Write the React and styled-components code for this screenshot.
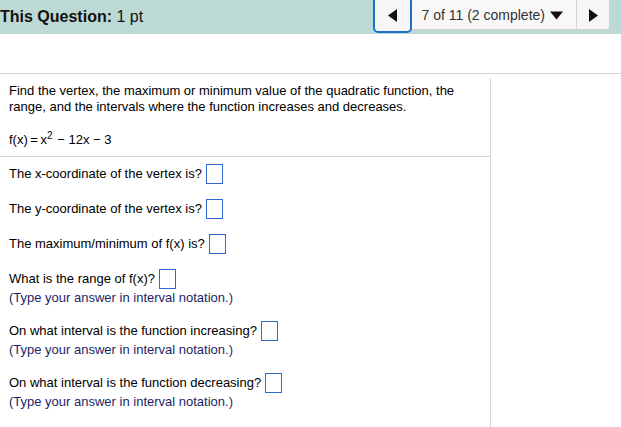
import styled, { createGlobalStyle } from "styled-components";

const GlobalStyle = createGlobalStyle`
  html, body {
    margin: 0;
    padding: 0;
    background: #fff;
  }
  body {
    font-family: "Liberation Sans", Arial, Helvetica, sans-serif;
    color: #000;
  }
`;

const questions = [
  { label: "The x-coordinate of the vertex is?" },
  { label: "The y-coordinate of the vertex is?" },
  { label: "The maximum/minimum of f(x) is?" },
  { label: "What is the range of f(x)?", hint: "(Type your answer in interval notation.)" },
  { label: "On what interval is the function increasing?", hint: "(Type your answer in interval notation.)" },
  { label: "On what interval is the function decreasing?", hint: "(Type your answer in interval notation.)" },
];

function Triangle({ dir }) {
  if (dir === "down") {
    return (
      <svg width="13" height="9" viewBox="0 0 13 9">
        <path d="M0 0.5 L13 0.5 L6.5 8.5 Z" fill="#111" />
      </svg>
    );
  }
  const d = dir === "left" ? "M9 0 L9 13 L0 6.5 Z" : "M0 0 L0 13 L9 6.5 Z";
  return (
    <svg width="9" height="13" viewBox="0 0 9 13">
      <path d={d} fill="#111" />
    </svg>
  );
}

function App() {
  return (
    <Page>
      <GlobalStyle />
      <Header>
        <Title>
          <b>This Question:</b> 1 pt
        </Title>
        <Nav>
          <NavArrow $focused $width={39}>
            <Triangle dir="left" />
          </NavArrow>
          <NavLabel>
            7 of 11 (2 complete)
            <Triangle dir="down" />
          </NavLabel>
          <NavArrow $width={33}>
            <Triangle dir="right" />
          </NavArrow>
        </Nav>
      </Header>
      <Spacer />
      <Body>
        <MainColumn>
          <Prompt>
            <Para>
              Find the vertex, the maximum or minimum value of the quadratic function, the
              range, and the intervals where the function increases and decreases.
            </Para>
            <Formula>
              f(x)&#8201;=&#8201;x<Sup>2</Sup> &minus; 12x &minus; 3
            </Formula>
          </Prompt>
          <Questions>
            {questions.map((q) => (
              <Question key={q.label}>
                <AnswerRow>
                  {q.label}
                  <AnswerBox />
                </AnswerRow>
                {q.hint && <Hint>{q.hint}</Hint>}
              </Question>
            ))}
          </Questions>
        </MainColumn>
      </Body>
    </Page>
  );
}

const Page = styled.div`
  display: flex;
  flex-direction: column;
  min-height: 100vh;
  overflow: hidden;
`;

const Header = styled.div`
  display: flex;
  align-items: flex-start;
  justify-content: space-between;
  height: 34px;
  background: #bcd9d5;
  overflow: hidden;
`;

const Title = styled.div`
  font-size: 16px;
  line-height: 34px;
  color: #111;
  b {
    font-weight: bold;
  }
`;

const Nav = styled.div`
  display: flex;
  align-items: flex-start;
  margin-top: -4px;
  margin-right: 11px;
`;

const NavArrow = styled.div`
  box-sizing: border-box;
  display: flex;
  align-items: center;
  justify-content: center;
  width: ${(p) => p.$width}px;
  height: ${(p) => (p.$focused ? 37 : 34)}px;
  padding-top: 4px;
  padding-bottom: ${(p) => (p.$focused ? 3 : 0)}px;
  background: #f6f6f6;
  border: ${(p) => (p.$focused ? "2px solid #1e6fc8" : "1px solid #d2d2d2")};
  border-left: ${(p) => (p.$focused ? "2px solid #1e6fc8" : "none")};
  border-radius: ${(p) => (p.$focused ? "5px" : "0 4px 4px 0")};
`;

const NavLabel = styled.div`
  box-sizing: border-box;
  display: flex;
  align-items: center;
  gap: 5px;
  height: 34px;
  padding: 4px 13px 0 10px;
  background: #f8f8f8;
  border: 1px solid #d2d2d2;
  border-left: none;
  font-size: 14px;
  color: #333;
`;

const Spacer = styled.div`
  height: 39px;
  border-bottom: 1px solid #d4d4dc;
`;

const Body = styled.div`
  flex: 1;
  display: flex;
`;

const MainColumn = styled.div`
  width: 490px;
  margin-top: 4px;
  border-right: 1px solid #d4d4dc;
  font-size: 13px;
  line-height: 16px;
`;

const Prompt = styled.div`
  padding: 5px 9px 8px;
  border-bottom: 1px solid #d4d4dc;
`;

const Para = styled.p`
  margin: 0 0 17px;
  width: 460px;
`;

const Formula = styled.div`
  white-space: nowrap;
`;

const Sup = styled.sup`
  font-size: 10px;
  line-height: 0;
  vertical-align: 5px;
  margin-right: 1px;
`;

const Questions = styled.div`
  display: flex;
  flex-direction: column;
  gap: 15px;
  padding: 7px 9px;
`;

const Question = styled.div`
  display: flex;
  flex-direction: column;
`;

const AnswerRow = styled.div`
  display: flex;
  align-items: center;
  height: 20px;
  white-space: nowrap;
`;

const AnswerBox = styled.span`
  box-sizing: border-box;
  display: inline-block;
  width: 17px;
  height: 20px;
  margin-left: 4px;
  border: 1px solid #2f68cf;
  background: #fff;
`;

const Hint = styled.div`
  margin-top: 1px;
  color: #1c1f66;
`;

export default App;
